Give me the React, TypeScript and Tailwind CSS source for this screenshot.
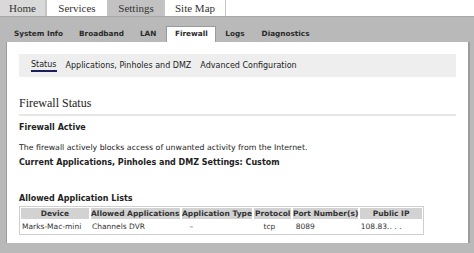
import React from "react";

const sans = { fontFamily: '"DejaVu Sans", "Liberation Sans", sans-serif' };
const serif = { fontFamily: '"Liberation Serif", "DejaVu Serif", serif' };

export default function App() {
  const headers = [
    { t: "Device", w: "w-[70px]" },
    { t: "Allowed Applications", w: "w-[92px]" },
    { t: "Application Type", w: "w-[73px]" },
    { t: "Protocol", w: "w-[38px]" },
    { t: "Port Number(s)", w: "w-[65px]" },
    { t: "Public IP", w: "w-[64px]" },
  ];
  const row = ["Marks-Mac-mini", "Channels DVR", "–", "tcp", "8089", "108.83.\u2024 \u2024 \u2024"];
  return (
    <div className="w-[474px] h-[253px] overflow-hidden bg-white flex flex-col" style={sans}>
      {/* top tabs */}
      <div className="flex h-[16px] bg-white text-[11px] text-[#333]" style={serif}>
        <div className="w-[47px] bg-[#d9d9d9] flex items-center justify-center border-r-2 border-[#c4c4c4]">Home</div>
        <div className="w-[62px] bg-white flex items-center justify-center border-r-2 border-[#c4c4c4]">Services</div>
        <div className="w-[56px] bg-[#c2c2c2] flex items-center justify-center border-r-2 border-[#c4c4c4]">Settings</div>
        <div className="w-[61px] bg-white flex items-center justify-center border-r border-[#c4c4c4]">Site Map</div>
        <div className="flex-1 bg-white" />
      </div>
      {/* sub tabs */}
      <div className="h-[26px] bg-[#b9b9b9] border-t border-[#a8a8a8] flex items-end text-[7.3px] font-bold text-[#2a2a2a]">
        <div className="flex items-center h-[16px] gap-0">
          <span className="ml-[14px]">System Info</span>
          <span className="ml-[16px]">Broadband</span>
          <span className="ml-[16px]">LAN</span>
          <span className="ml-[10px] h-[16px] w-[50px] bg-white flex items-center justify-center border-t border-l border-r border-[#9a9a9a] font-bold">Firewall</span>
          <span className="ml-[9px]">Logs</span>
          <span className="ml-[17px]">Diagnostics</span>
        </div>
      </div>
      {/* main */}
      <div className="flex-1 flex bg-[#b9b9b9] pb-[10px]">
        <div className="w-[7px] border-r border-[#9c9c9c]" />
        <div className="flex-1 bg-white flex flex-col px-[12px] pt-[12px]">
          <div className="h-[23px] bg-[#eeeeee] flex items-center text-[8px] text-[#222] pl-[12px] gap-[9px] mr-[0px]">
            <span className="border-b-2 border-[#1b1f5a] leading-[11px]">Status</span>
            <span className="leading-[11px]">Applications, Pinholes and DMZ</span>
            <span className="leading-[11px]">Advanced Configuration</span>
          </div>
          <div className="mt-[19px] text-[12px] text-[#222] leading-[14px] pb-[4px] border-b-2 border-[#e6e6e6]" style={serif}>Firewall Status</div>
          <div className="mt-[7px] text-[8px] font-bold text-[#222] leading-[10px]">Firewall Active</div>
          <div className="mt-[10px] text-[7.8px] text-[#222] leading-[10px]">The firewall actively blocks access of unwanted activity from the Internet.</div>
          <div className="mt-[5px] text-[8px] font-bold text-[#222] leading-[10px]">Current Applications, Pinholes and DMZ Settings: Custom</div>
          <div className="mt-[26px] text-[8px] font-bold text-[#222] leading-[10px]">Allowed Application Lists</div>
          <div className="mt-[2px] w-[405px] border border-[#cfcfcf] p-[1px] flex flex-col gap-[1px]">
            <div className="flex gap-[2px] h-[11px]">
              {headers.map((h) => (
                <div key={h.t} className={`${h.w} bg-[#d2d2d2] text-[7.5px] font-bold text-[#333] flex items-center justify-center whitespace-nowrap`}>{h.t}</div>
              ))}
            </div>
            <div className="flex gap-[2px] h-[13px]">
              {row.map((c, i) => (
                <div key={i} className={`${headers[i].w} text-[7.5px] text-[#333] flex items-center whitespace-nowrap ${i === 2 ? "pl-[7px]" : i === 3 ? "pl-[8px]" : "pl-[1px]"}`}>{c}</div>
              ))}
            </div>
          </div>
        </div>
        <div className="w-[6px] border-l-2 border-[#9c9c9c]" />
      </div>
    </div>
  );
}
